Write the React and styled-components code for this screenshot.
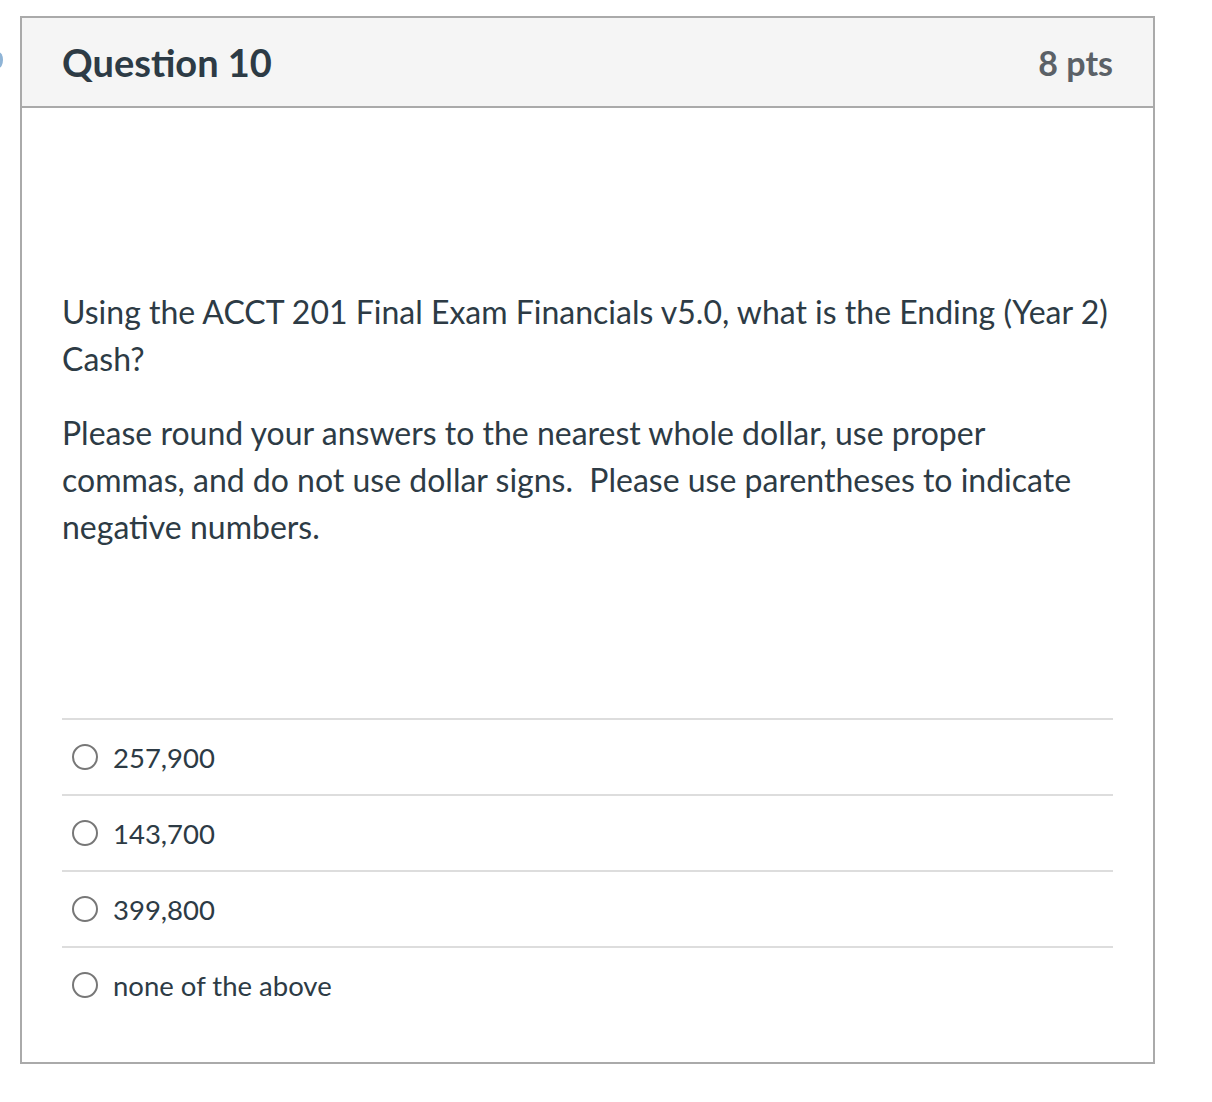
import styled, { createGlobalStyle } from "styled-components";

const GlobalStyle = createGlobalStyle`
  body {
    margin: 0;
    background: #fff;
    font-family: Lato, "Open Sans", "Liberation Sans", sans-serif;
    color: #2d3b45;
  }
`;

const answers = ["257,900", "143,700", "399,800", "none of the above"];

const Page = styled.div`
  position: relative;
  width: 1212px;
  height: 1102px;
  padding: 16px 0 0 20px;
  box-sizing: border-box;
`;

const Marker = styled.div`
  position: absolute;
  left: -6px;
  top: 52px;
  width: 9px;
  height: 16px;
  border-radius: 50%;
  background: #8fb4d6;
`;

const Card = styled.div`
  width: 1135px;
  height: 1048px;
  box-sizing: border-box;
  border: 2px solid #aaaaaa;
  display: flex;
  flex-direction: column;
`;

const Header = styled.div`
  height: 90px;
  box-sizing: border-box;
  background: #f5f5f5;
  border-bottom: 2px solid #aaaaaa;
  display: flex;
  align-items: center;
  justify-content: space-between;
  padding: 0 40px 0 40px;
`;

const Title = styled.div`
  font-size: 38px;
  font-weight: 700;
  color: #2d3b45;
`;

const Points = styled.div`
  font-size: 34px;
  font-weight: 700;
  color: #5b6167;
`;

const Body = styled.div`
  padding: 180px 40px 0 40px;
`;

const Paragraph = styled.p`
  margin: 0 0 27px;
  font-size: 32px;
  line-height: 47px;
`;

const AnswerList = styled.div`
  margin-top: 168px;
`;

const Answer = styled.label`
  display: flex;
  align-items: center;
  height: 76px;
  box-sizing: border-box;
  border-top: 2px solid #dddddd;
  padding-left: 10px;
  font-size: 27.5px;
`;

const Radio = styled.span`
  width: 26px;
  height: 26px;
  box-sizing: border-box;
  border: 2px solid #777;
  border-radius: 50%;
  margin-right: 15px;
  flex-shrink: 0;
`;

export default function App() {
  return (
    <Page>
      <GlobalStyle />
      <Marker />
      <Card>
        <Header>
          <Title>Question 10</Title>
          <Points>8 pts</Points>
        </Header>
        <Body>
          <Paragraph>
            Using the ACCT 201 Final Exam Financials v5.0, what is the Ending (Year 2) Cash?
          </Paragraph>
          <Paragraph>
            Please round your answers to the nearest whole dollar, use proper commas, and do not use dollar signs.&nbsp; Please use parentheses to indicate negative numbers.
          </Paragraph>
          <AnswerList>
            {answers.map((a) => (
              <Answer key={a}>
                <Radio />
                {a}
              </Answer>
            ))}
          </AnswerList>
        </Body>
      </Card>
    </Page>
  );
}
